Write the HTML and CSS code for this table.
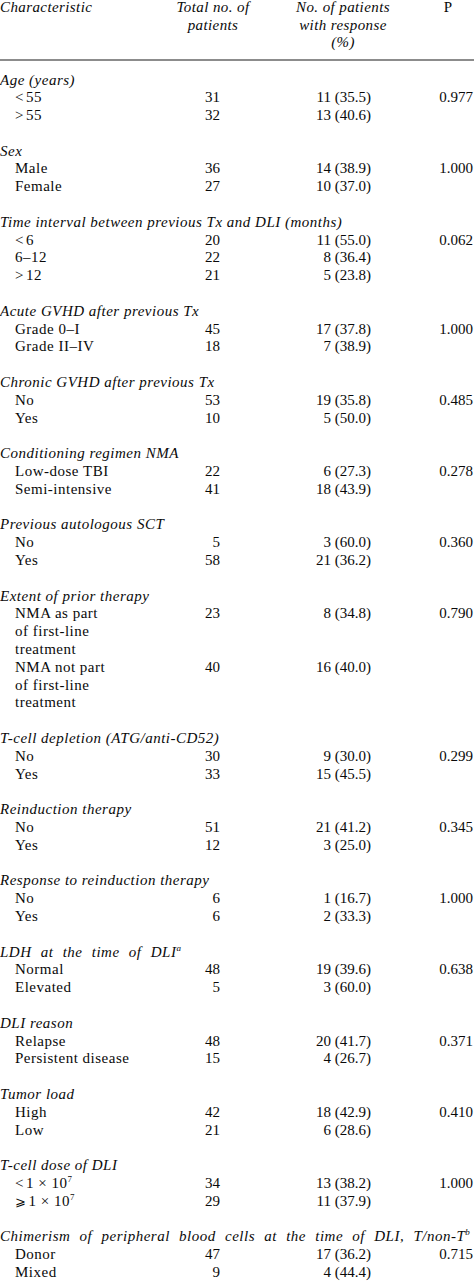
FILE: index.html
```html
<!DOCTYPE html>
<html>
<head>
<meta charset="utf-8">
<link rel="stylesheet" href="styles.css">
</head>
<body>
<div class="table">
  <div class="head">
    <div class="h h1">Characteristic</div>
    <div class="h h2">Total no. of<br>patients</div>
    <div class="h h3">No. of patients<br>with response<br>(%)</div>
    <div class="h h4">P</div>
  </div>
  <div class="body">
    <div class="group">
      <div class="gh">Age (years)</div>
      <div class="row"><span class="lab"><span class="op">&lt;</span>55</span><span class="n">31</span><span class="r">11 (35.5)</span><span class="p">0.977</span></div>
      <div class="row"><span class="lab"><span class="op">&gt;</span>55</span><span class="n">32</span><span class="r">13 (40.6)</span><span class="p"></span></div>
    </div>
    <div class="group">
      <div class="gh">Sex</div>
      <div class="row"><span class="lab">Male</span><span class="n">36</span><span class="r">14 (38.9)</span><span class="p">1.000</span></div>
      <div class="row"><span class="lab">Female</span><span class="n">27</span><span class="r">10 (37.0)</span><span class="p"></span></div>
    </div>
    <div class="group">
      <div class="gh">Time interval between previous Tx and DLI (months)</div>
      <div class="row"><span class="lab"><span class="op">&lt;</span>6</span><span class="n">20</span><span class="r">11 (55.0)</span><span class="p">0.062</span></div>
      <div class="row"><span class="lab">6–12</span><span class="n">22</span><span class="r">8 (36.4)</span><span class="p"></span></div>
      <div class="row"><span class="lab"><span class="op">&gt;</span>12</span><span class="n">21</span><span class="r">5 (23.8)</span><span class="p"></span></div>
    </div>
    <div class="group">
      <div class="gh">Acute GVHD after previous Tx</div>
      <div class="row"><span class="lab">Grade 0–I</span><span class="n">45</span><span class="r">17 (37.8)</span><span class="p">1.000</span></div>
      <div class="row"><span class="lab">Grade II–IV</span><span class="n">18</span><span class="r">7 (38.9)</span><span class="p"></span></div>
    </div>
    <div class="group">
      <div class="gh">Chronic GVHD after previous Tx</div>
      <div class="row"><span class="lab">No</span><span class="n">53</span><span class="r">19 (35.8)</span><span class="p">0.485</span></div>
      <div class="row"><span class="lab">Yes</span><span class="n">10</span><span class="r">5 (50.0)</span><span class="p"></span></div>
    </div>
    <div class="group">
      <div class="gh">Conditioning regimen NMA</div>
      <div class="row"><span class="lab">Low-dose TBI</span><span class="n">22</span><span class="r">6 (27.3)</span><span class="p">0.278</span></div>
      <div class="row"><span class="lab">Semi-intensive</span><span class="n">41</span><span class="r">18 (43.9)</span><span class="p"></span></div>
    </div>
    <div class="group">
      <div class="gh">Previous autologous SCT</div>
      <div class="row"><span class="lab">No</span><span class="n">5</span><span class="r">3 (60.0)</span><span class="p">0.360</span></div>
      <div class="row"><span class="lab">Yes</span><span class="n">58</span><span class="r">21 (36.2)</span><span class="p"></span></div>
    </div>
    <div class="group">
      <div class="gh">Extent of prior therapy</div>
      <div class="row"><span class="lab">NMA as part<br>of first-line<br>treatment</span><span class="n">23</span><span class="r">8 (34.8)</span><span class="p">0.790</span></div>
      <div class="row"><span class="lab">NMA not part<br>of first-line<br>treatment</span><span class="n">40</span><span class="r">16 (40.0)</span><span class="p"></span></div>
    </div>
    <div class="group">
      <div class="gh">T-cell depletion (ATG/anti-CD52)</div>
      <div class="row"><span class="lab">No</span><span class="n">30</span><span class="r">9 (30.0)</span><span class="p">0.299</span></div>
      <div class="row"><span class="lab">Yes</span><span class="n">33</span><span class="r">15 (45.5)</span><span class="p"></span></div>
    </div>
    <div class="group">
      <div class="gh">Reinduction therapy</div>
      <div class="row"><span class="lab">No</span><span class="n">51</span><span class="r">21 (41.2)</span><span class="p">0.345</span></div>
      <div class="row"><span class="lab">Yes</span><span class="n">12</span><span class="r">3 (25.0)</span><span class="p"></span></div>
    </div>
    <div class="group">
      <div class="gh">Response to reinduction therapy</div>
      <div class="row"><span class="lab">No</span><span class="n">6</span><span class="r">1 (16.7)</span><span class="p">1.000</span></div>
      <div class="row"><span class="lab">Yes</span><span class="n">6</span><span class="r">2 (33.3)</span><span class="p"></span></div>
    </div>
    <div class="group">
      <div class="gh spread">LDH at the time of DLI<sup>a</sup></div>
      <div class="row"><span class="lab">Normal</span><span class="n">48</span><span class="r">19 (39.6)</span><span class="p">0.638</span></div>
      <div class="row"><span class="lab">Elevated</span><span class="n">5</span><span class="r">3 (60.0)</span><span class="p"></span></div>
    </div>
    <div class="group">
      <div class="gh">DLI reason</div>
      <div class="row"><span class="lab">Relapse</span><span class="n">48</span><span class="r">20 (41.7)</span><span class="p">0.371</span></div>
      <div class="row"><span class="lab">Persistent disease</span><span class="n">15</span><span class="r">4 (26.7)</span><span class="p"></span></div>
    </div>
    <div class="group">
      <div class="gh">Tumor load</div>
      <div class="row"><span class="lab">High</span><span class="n">42</span><span class="r">18 (42.9)</span><span class="p">0.410</span></div>
      <div class="row"><span class="lab">Low</span><span class="n">21</span><span class="r">6 (28.6)</span><span class="p"></span></div>
    </div>
    <div class="group">
      <div class="gh">T-cell dose of DLI</div>
      <div class="row"><span class="lab"><span class="op">&lt;</span>1 × 10<sup>7</sup></span><span class="n">34</span><span class="r">13 (38.2)</span><span class="p">1.000</span></div>
      <div class="row"><span class="lab"><span class="op geq">⩾</span>1 × 10<sup>7</sup></span><span class="n">29</span><span class="r">11 (37.9)</span><span class="p"></span></div>
    </div>
    <div class="group">
      <div class="gh spread">Chimerism of peripheral blood cells at the time of DLI, T/non-T<sup>b</sup></div>
      <div class="row"><span class="lab">Donor</span><span class="n">47</span><span class="r">17 (36.2)</span><span class="p">0.715</span></div>
      <div class="row"><span class="lab">Mixed</span><span class="n">9</span><span class="r">4 (44.4)</span><span class="p"></span></div>
    </div>
  </div>
</div>
</body>
</html>
```

FILE: styles.css
```css
html, body {
  margin: 0;
  padding: 0;
  background: #ffffff;
}
body {
  font-family: "Liberation Serif", "Times New Roman", "DejaVu Serif", serif;
  font-size: 15px;
  color: #0a0a0a;
  width: 474px;
  overflow: hidden;
}
.table {
  width: 474px;
}
.head {
  display: grid;
  grid-template-columns: 160px 106px 154px 54px;
  line-height: 17.5px;
  padding-bottom: 7px;
  border-bottom: 2px solid #8c8c8c;
  margin-top: -1px;
}
.h {
  font-style: italic;
  text-align: center;
  letter-spacing: 0.4px;
}
.h1 {
  text-align: left;
}
.h4 {
  font-style: normal;
  padding-left: 2px;
}
.body {
  padding-top: 11px;
  line-height: 17.8px;
}
.group {
  margin-bottom: 17.8px;
}
.gh {
  font-style: italic;
  letter-spacing: 0.5px;
  white-space: nowrap;
}
.spread {
  word-spacing: 5px;
}
.row {
  display: grid;
  grid-template-columns: 170px 50px 151px 103px;
}
.lab {
  padding-left: 15px;
  white-space: nowrap;
  letter-spacing: 0.5px;
}
.op {
  margin-right: 2px;
}
.n, .r, .p {
  text-align: right;
  letter-spacing: 0;
}
.p {
  padding-right: 1px;
}
sup {
  font-size: 9px;
  line-height: 0;
  vertical-align: 6px;
}
.geq {
  font-family: "DejaVu Serif", serif;
  font-size: 13px;
}
```
